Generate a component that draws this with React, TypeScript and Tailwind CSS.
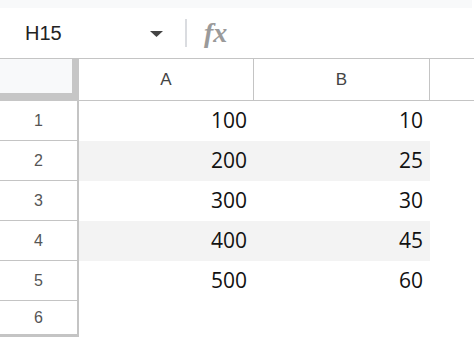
import { ReactNode } from "react";

const rows = [
  { n: 1, a: "100", b: "10" },
  { n: 2, a: "200", b: "25" },
  { n: 3, a: "300", b: "30" },
  { n: 4, a: "400", b: "45" },
  { n: 5, a: "500", b: "60" },
  { n: 6, a: "", b: "" },
];

function RowHead({ children, h }: { children: ReactNode; h: string }) {
  return (
    <div
      className={`${h} flex items-center justify-center border-b border-r-2 border-[#c4c4c4] bg-white text-[16px] text-[#555]`}
    >
      {children}
    </div>
  );
}

export default function App() {
  return (
    <div className="h-[338px] w-[474px] overflow-hidden bg-white font-['Liberation_Sans',Arial,sans-serif]">
      <div className="h-[8px] w-[472px] bg-[#f8f9fa]" />

      {/* name box + formula */}
      <div className="flex h-[50px] items-center">
        <div className="w-[150px] pl-[25px] text-[20px] text-[#222]">H15</div>
        <svg width="13" height="6" viewBox="0 0 13 6" className="mt-[1px]">
          <path d="M0 0h13L6.5 6z" fill="#444" />
        </svg>
        <div className="ml-[22px] h-[28px] w-[2px] bg-[#dadce0]" />
        <div className="ml-[17px] font-['Liberation_Serif',serif] text-[28px] font-semibold italic leading-none text-[#9a9a9a]">
          fx
        </div>
      </div>

      <div className="grid grid-cols-[79px_175px_176px_1fr] border-t border-[#c4c4c4]">
        {/* header row */}
        <div className="h-[42px] border-b-[8px] border-r-[7px] border-[#c6c6c6] bg-[#f8f9fa]" />
        <div className="flex h-[42px] items-center justify-center border-b border-r border-[#c4c4c4] text-[17px] text-[#444]">
          A
        </div>
        <div className="flex h-[42px] items-center justify-center border-b border-r border-[#c4c4c4] text-[17px] text-[#444]">
          B
        </div>
        <div className="h-[42px] border-b border-[#c4c4c4]" />

        {rows.map((r) => {
          const shade = r.n === 2 || r.n === 4 ? "bg-[#f3f3f3]" : "bg-white";
          const h = r.n === 6 ? "h-[36px]" : "h-[40px]";
          return (
            <div key={r.n} className="contents">
              <RowHead h={r.n === 6 ? "h-[36px] border-b-[3px]" : h}>{r.n}</RowHead>
              <div
                className={`${h} ${shade} flex items-center justify-end pr-[7px] font-['Open_Sans',sans-serif] text-[21px] text-[#111]`}
              >
                {r.a}
              </div>
              <div
                className={`${h} ${shade} flex items-center justify-end pr-[7px] font-['Open_Sans',sans-serif] text-[21px] text-[#111]`}
              >
                {r.b}
              </div>
              <div className={h} />
            </div>
          );
        })}
      </div>
    </div>
  );
}
